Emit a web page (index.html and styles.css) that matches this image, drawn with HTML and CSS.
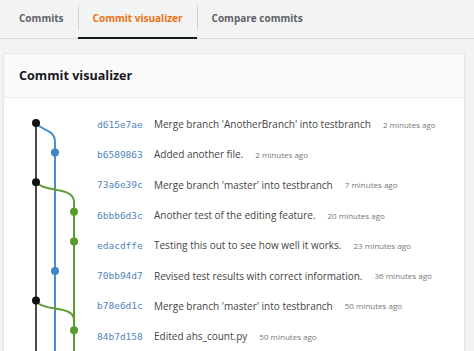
FILE: index.html
```html
<!DOCTYPE html>
<html>
<head>
    <title>Commit visualizer</title>
    <link rel="stylesheet" href="styles.css">
</head>
<body>

    <!-- 탭 -->
    <div class="tabs">
        <div class="tab">Commits</div>
        <div class="tab active">Commit visualizer</div>
        <div class="tab">Compare commits</div>
    </div>

    <div class="panel">
        <div class="panel-header">Commit visualizer</div>
        <div class="panel-body">
            <svg class="graph" width="93" height="260" viewBox="0 0 93 260">
                <!-- 선 -->
                <path d="M32 25 V260" stroke="#1b1b1b" stroke-width="1.6" fill="none"/>
                <path d="M32 25 C36 32, 51 31, 51 44 V260" stroke="#4a8dc9" stroke-width="2" fill="none"/>
                <path d="M32 84 C40 95, 70 88, 70 104 V260" stroke="#5f9b32" stroke-width="2" fill="none"/>
                <path d="M32 203 C40 214, 70 207, 70 222 V232" stroke="#5f9b32" stroke-width="2" fill="none"/>
                <!-- 점 -->
                <circle cx="32" cy="25" r="4" fill="#111"/>
                <circle cx="51" cy="54.6" r="4" fill="#3f86c6"/>
                <circle cx="32" cy="84.2" r="4" fill="#111"/>
                <circle cx="70" cy="113.8" r="4" fill="#5a9a2c"/>
                <circle cx="70" cy="143.4" r="4" fill="#5a9a2c"/>
                <circle cx="51" cy="173" r="4" fill="#3f86c6"/>
                <circle cx="32" cy="202.6" r="4" fill="#111"/>
                <circle cx="70" cy="232.2" r="4" fill="#5a9a2c"/>
            </svg>
            <div class="commits">
                <div class="row"><span class="hash">d615e7ae</span><span class="msg">Merge branch 'AnotherBranch' into testbranch</span><span class="time">2 minutes ago</span></div>
                <div class="row"><span class="hash">b6589863</span><span class="msg">Added another file.</span><span class="time">2 minutes ago</span></div>
                <div class="row"><span class="hash">73a6e39c</span><span class="msg">Merge branch 'master' into testbranch</span><span class="time">7 minutes ago</span></div>
                <div class="row"><span class="hash">6bbb6d3c</span><span class="msg">Another test of the editing feature.</span><span class="time">20 minutes ago</span></div>
                <div class="row"><span class="hash">edacdffe</span><span class="msg">Testing this out to see how well it works.</span><span class="time">23 minutes ago</span></div>
                <div class="row"><span class="hash">70bb94d7</span><span class="msg">Revised test results with correct information.</span><span class="time">36 minutes ago</span></div>
                <div class="row"><span class="hash">b78e6d1c</span><span class="msg">Merge branch 'master' into testbranch</span><span class="time">50 minutes ago</span></div>
                <div class="row"><span class="hash">84b7d158</span><span class="msg">Edited ahs_count.py</span><span class="time">50 minutes ago</span></div>
            </div>
        </div>
    </div>

</body>
</html>
```

FILE: styles.css
```css
body {
    margin: 0;
    font-family: 'Open Sans', 'Liberation Sans', sans-serif;
    background-color: #f2f3f3;
    color: #333;
    overflow: hidden;
}

.tabs {
    display: flex;
    height: 38px;
    border-bottom: 1px solid #d9dcdc;
}

.tab {
    position: relative;
    display: flex;
    align-items: center;
    padding: 0 14px;
    font-size: 10px;
    font-weight: bold;
    color: #5f6368;
    border-left: 1px solid #d0d3d3;
    margin: 5px 0 8px;
}

.tab:first-child {
    border-left: none;
    padding-left: 19px;
}

.tab.active {
    color: #ec7211;
}

.tab.active::after {
    content: '';
    position: absolute;
    left: -1px;
    right: 0;
    bottom: -9px;
    height: 2px;
    background-color: #16191f;
}

.panel {
    margin: 14px 9px 0 3px;
    background-color: #fff;
    border: 1px solid #e6e8e8;
    border-bottom: none;
    box-shadow: 0 1px 2px rgba(0, 0, 0, 0.06);
}

.panel-header {
    height: 43px;
    display: flex;
    align-items: center;
    padding-left: 15px;
    font-size: 12.6px;
    font-weight: bold;
    color: #16191f;
    background-color: #fafafa;
    border-bottom: 1px solid #eaeded;
}

.panel-body {
    display: flex;
    height: 260px;
}

.graph {
    flex: none;
}

.commits {
    padding-top: 11px;
}

.row {
    display: flex;
    align-items: center;
    height: 30.3px;
    white-space: nowrap;
}

.hash {
    font-family: 'DejaVu Sans Mono', monospace;
    font-size: 9.5px;
    color: #4f86bd;
    width: 57px;
}

.msg {
    font-size: 10px;
    color: #444;
}

.time {
    font-size: 8px;
    color: #777;
    margin-left: 12px;
}
```
